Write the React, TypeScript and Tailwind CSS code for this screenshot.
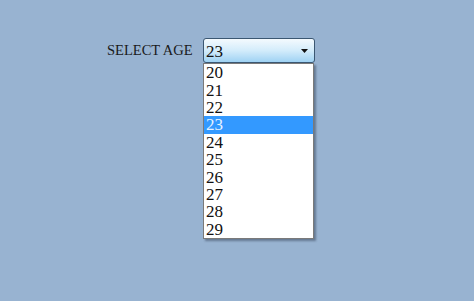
import React from 'react';

const ages = [20, 21, 22, 23, 24, 25, 26, 27, 28, 29];

export default function App() {
  const selected = 23;
  return (
    <div
      className="w-[474px] h-[301px] bg-[#98b3d1] overflow-hidden"
      style={{ fontFamily: '"Liberation Serif", serif' }}
    >
      <div className="flex items-start pt-[38px] pl-[107px]">
        <span className="w-[96px] text-[14.5px] leading-none text-[#1a1a1a] mt-[5px] whitespace-nowrap">
          SELECT AGE
        </span>
        <div className="relative w-[112px]">
          <div className="h-[25px] rounded-[3px] border border-[#3b5772] bg-gradient-to-b from-[#f4fafe] via-[#d3ecfb] to-[#9fd2f3] flex items-center justify-between pl-[2px] pr-[6px]">
            <span className="text-[17px] leading-none text-[#111] mt-[1px]">23</span>
            <svg width="7" height="4" viewBox="0 0 7 4">
              <path d="M0 0h7L3.5 4z" fill="#111" />
            </svg>
          </div>
          <ul className="absolute left-0 top-[25px] w-[111px] bg-white border border-[#7a7a7a] shadow-[2px_2px_2px_rgba(40,50,70,0.45)]">
            {ages.map((a) => (
              <li
                key={a}
                className={
                  a === selected
                    ? 'h-[17.4px] flex items-center pl-[2px] bg-[#3399ff] text-[#e6f2ff] text-[17px] leading-none'
                    : 'h-[17.4px] flex items-center pl-[2px] text-[#111] text-[17px] leading-none'
                }
              >
                {a}
              </li>
            ))}
          </ul>
        </div>
      </div>
    </div>
  );
}
